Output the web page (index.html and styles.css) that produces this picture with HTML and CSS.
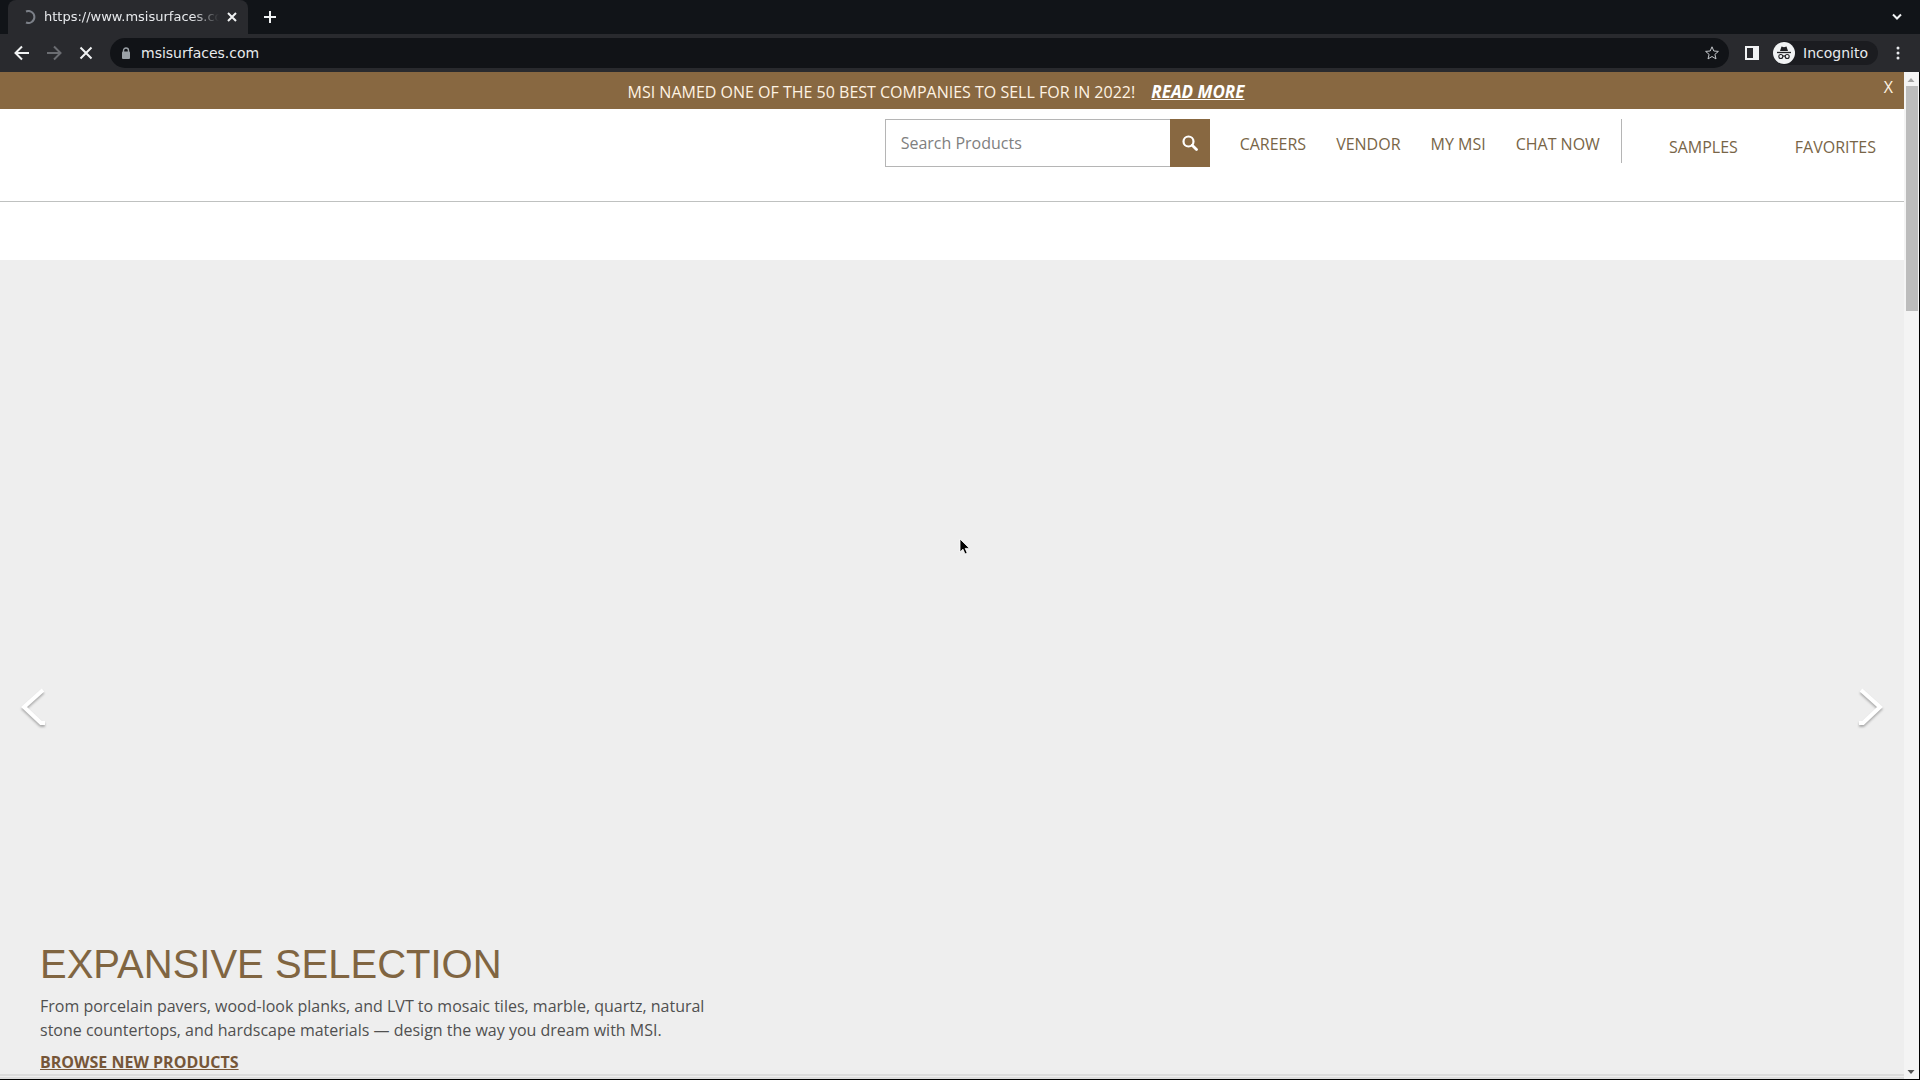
FILE: index.html
```
<!DOCTYPE html>
<html lang="en">
<head>
    <meta charset="UTF-8">
    <meta name="viewport" content="width=device-width, initial-scale=1.0">
    <link rel="stylesheet" href="styles.css">
    <title>MSI Surfaces</title>
</head>
<body>
    <div class="tab-strip">
        <div class="tab">
            <svg class="spinner" width="14" height="14" viewBox="0 0 14 14"><path d="M4 1.500a6 6 0 1 1 0 11"/></svg>
            <span class="tab-title">https://www.msisurfaces.com</span>
            <button class="icon-btn" aria-label="Close tab">
                <svg width="10" height="10" viewBox="0 0 10 10"><path d="M1 1l8 8M9 1l-8 8"/></svg>
            </button>
        </div>
        <button class="icon-btn new-tab" aria-label="New tab">
            <svg width="14" height="14" viewBox="0 0 14 14"><path d="M7 1v12M1 7h12"/></svg>
        </button>
        <button class="icon-btn tab-search" aria-label="Search tabs">
            <svg width="12" height="8" viewBox="0 0 12 8"><path d="M2 1.500l4 4 4-4"/></svg>
        </button>
    </div>

    <div class="toolbar">
        <button class="icon-btn" aria-label="Back">
            <svg width="16" height="16" viewBox="0 0 16 16"><path d="M15 8H2M8 1.500L1.500 8 8 14.500"/></svg>
        </button>
        <button class="icon-btn dim" aria-label="Forward">
            <svg width="16" height="16" viewBox="0 0 16 16"><path d="M1 8h13M8 1.500L14.500 8 8 14.500"/></svg>
        </button>
        <button class="icon-btn" aria-label="Stop loading">
            <svg width="16" height="16" viewBox="0 0 16 16"><path d="M2.500 2.500l11 11M13.500 2.500l-11 11"/></svg>
        </button>
        <div class="address-bar">
            <svg class="lock" width="10" height="13" viewBox="0 0 10 13">
                <path d="M2.500 6V3.500a2.500 2.500 0 0 1 5 0V6" fill="none" stroke="#9aa0a6" stroke-width="1.400"/>
                <rect x="1" y="4.500" width="8" height="7.500" rx="1" fill="#9aa0a6"/>
            </svg>
            <input type="text" class="url" value="msisurfaces.com" aria-label="Address">
            <button class="icon-btn star" aria-label="Bookmark this tab">
                <svg width="16" height="16" viewBox="0 0 16 16"><path d="M8 1.800l1.800 4.200 4.600.4-3.500 3 1.100 4.500L8 11.500l-4 2.400 1.100-4.500-3.500-3 4.600-.4z"/></svg>
            </button>
        </div>
        <button class="icon-btn side-panel" aria-label="Side panel">
            <svg width="14" height="14" viewBox="0 0 14 14"><rect x="1" y="1" width="12" height="12"/><path d="M9 1h4v12H9z" fill="#f1f3f4"/></svg>
        </button>
        <div class="incognito">
            <svg width="22" height="22" viewBox="0 0 22 22">
                <circle cx="11" cy="11" r="11" fill="#f1f3f4"/>
                <path d="M7 9l1.500-4.500 2.500.7 2.500-.7L15 9z" fill="#202124"/>
                <path d="M4 10.500h14" stroke="#202124" stroke-width="1.300"/>
                <g fill="none" stroke="#202124" stroke-width="1.100">
                    <circle cx="7.800" cy="14.500" r="2"/>
                    <circle cx="14.200" cy="14.500" r="2"/>
                    <path d="M9.800 14.200q1.200-.6 2.400 0"/>
                </g>
            </svg>
            <span>Incognito</span>
        </div>
        <button class="icon-btn menu" aria-label="Menu">
            <svg width="4" height="14" viewBox="0 0 4 14"><g fill="#e8eaed" stroke="none"><circle cx="2" cy="2" r="1.500"/><circle cx="2" cy="7" r="1.500"/><circle cx="2" cy="12" r="1.500"/></g></svg>
        </button>
    </div>

    <div class="viewport">
        <div class="page">
            <div class="banner">
                <p>MSI NAMED ONE OF THE 50 BEST COMPANIES TO SELL FOR IN 2022! <a href="#">READ MORE</a></p>
                <button class="banner-close" aria-label="Close banner">X</button>
            </div>

            <header class="header">
                <form class="search">
                    <input type="text" placeholder="Search Products" aria-label="Search Products">
                    <button type="button" aria-label="Search">
                        <svg width="16" height="16" viewBox="0 0 16 16" fill="none" stroke="#fff">
                            <circle cx="6.500" cy="6.500" r="5" stroke-width="2.200"/>
                            <path d="M10.200 10.200l4.300 4.300" stroke-width="2.800" stroke-linecap="round"/>
                        </svg>
                    </button>
                </form>
                <nav class="main-links">
                    <a href="#">CAREERS</a>
                    <a href="#">VENDOR</a>
                    <a href="#">MY MSI</a>
                    <a href="#">CHAT NOW</a>
                </nav>
                <nav class="user-links">
                    <a href="#">SAMPLES</a>
                    <a href="#">FAVORITES</a>
                </nav>
            </header>

            <div class="menu-bar"></div>

            <section class="hero">
                <button class="arrow arrow-prev" aria-label="Previous slide">
                    <svg width="28" height="40" viewBox="0 0 28 40"><path d="M25 3L6 20l17 16h4"/></svg>
                </button>
                <button class="arrow arrow-next" aria-label="Next slide">
                    <svg width="28" height="40" viewBox="0 0 28 40"><path d="M3 3l19 17L5 36H1"/></svg>
                </button>
                <div class="caption">
                    <h1>EXPANSIVE SELECTION</h1>
                    <p>From porcelain pavers, wood-look planks, and LVT to mosaic tiles, marble, quartz, natural stone countertops, and hardscape materials — design the way you dream with MSI.</p>
                    <a href="#">BROWSE NEW PRODUCTS</a>
                </div>
            </section>
        </div>

        <div class="scrollbar">
            <svg width="14" height="14" viewBox="0 0 14 14"><path d="M3.500 10L7 6l3.500 4z" fill="#a3a3a3"/></svg>
            <div class="track"><div class="thumb"></div></div>
            <svg width="14" height="14" viewBox="0 0 14 14"><path d="M3.500 5L7 9l3.500-4z" fill="#505050"/></svg>
        </div>
    </div>

    <svg class="cursor" width="12" height="18" viewBox="0 0 12 18">
        <path d="M1 1v13l3-2.800 2 4.800 2.200-1-2-4.600h4.300z" fill="#000" stroke="#fff" stroke-width=".8"/>
    </svg>
</body>
</html>
```
FILE: styles.css
```
* {
    box-sizing: border-box;
}

body {
    margin: 0;
    height: 100vh;
    display: flex;
    flex-direction: column;
    overflow: hidden;
    background-color: #000;
    font-family: "Open Sans", sans-serif;
    font-size: 16px;
    line-height: 24px;
}

button {
    border: none;
    padding: 0;
    background: none;
    font: inherit;
    cursor: pointer;
}

svg {
    display: block;
    flex: none;
}

/* browser chrome */
.tab-strip {
    display: flex;
    align-items: center;
    height: 34px;
    padding-left: 8px;
    padding-right: 17px;
    background-color: #111418;
    font-family: "DejaVu Sans", sans-serif;
    font-size: 13px;
}

.tab {
    display: flex;
    align-items: center;
    width: 240px;
    height: 34px;
    padding: 0 11px 0 14px;
    border-radius: 8px 8px 0 0;
    background-color: #292a2e;
    color: #e8eaed;
}

.spinner {
    fill: none;
    stroke: #7c8088;
    stroke-width: 2;
}

.tab-title {
    flex: 1;
    margin-left: 8px;
    margin-right: 8px;
    overflow: hidden;
    white-space: nowrap;
    mask-image: linear-gradient(to right, #000 85%, transparent);
}

.icon-btn svg {
    fill: none;
    stroke: #f1f3f4;
    stroke-width: 2;
}

.new-tab {
    margin-left: 15px;
}

.tab-search {
    margin-left: auto;
}

.toolbar {
    display: flex;
    align-items: center;
    height: 38px;
    padding: 0 20px 0 14px;
    background-color: #292a2e;
    color: #e8eaed;
    font-family: "DejaVu Sans", sans-serif;
    font-size: 14px;
}

.toolbar .icon-btn {
    margin-right: 16px;
}

.toolbar .dim svg {
    stroke: #6b6d72;
}

.address-bar {
    flex: 1;
    display: flex;
    align-items: center;
    height: 30px;
    padding: 0 9px 0 11px;
    border-radius: 15px;
    background-color: #111317;
}

.url {
    flex: 1;
    min-width: 0;
    margin-left: 8px;
    border: none;
    background: none;
    color: #e8eaed;
    font-family: "DejaVu Sans", sans-serif;
    font-size: 14px;
}

.toolbar .star {
    margin-right: 0;
}

.star svg {
    stroke: #c4c7cb;
    stroke-width: 1;
}

.toolbar .side-panel {
    margin-left: 16px;
    margin-right: 14px;
}

.incognito {
    display: flex;
    align-items: center;
    gap: 8px;
    height: 24px;
    padding-right: 10px;
    border-radius: 12px;
    background-color: #1b1c20;
}

.toolbar .menu {
    margin-left: 18px;
    margin-right: 0;
}

/* web page */
.viewport {
    flex: 1;
    display: flex;
    min-height: 0;
    margin: 0 1px 1px 0;
    background-color: #f4f4f4;
}

.page {
    flex: 1;
    display: flex;
    flex-direction: column;
    background-color: #fff;
}

.banner {
    position: relative;
    height: 37px;
    padding: 8px 32px 0 0;
    background-color: #886841;
    color: #fff3e3;
    text-align: center;
}

.banner p {
    margin: 0;
}

.banner a {
    margin-left: 12px;
    color: #fff;
    font-size: 17px;
    font-weight: bold;
    font-style: italic;
}

.banner-close {
    position: absolute;
    top: 3px;
    right: 11px;
    color: #fff3e3;
}

.header {
    display: flex;
    justify-content: flex-end;
    align-items: flex-start;
    height: 93px;
    padding: 10px 28px 0 0;
    border-bottom: 1px solid #bfc1c0;
}

.header a {
    color: #786547;
    text-decoration: none;
}

.search {
    display: flex;
}

.search input {
    width: 285px;
    height: 48px;
    padding: 0 15px;
    border: 1px solid #b5b5b5;
    border-right: none;
    font: inherit;
}

.search input::placeholder {
    color: #808080;
}

.search button {
    display: flex;
    align-items: center;
    justify-content: center;
    width: 40px;
    height: 48px;
    background-color: #886841;
}

.main-links {
    display: flex;
    gap: 30px;
    height: 44px;
    padding: 13px 21px 0 30px;
    border-right: 1px solid #b5b5b5;
}

.user-links {
    display: flex;
    gap: 57px;
    padding: 16px 0 0 47px;
}

.menu-bar {
    height: 58px;
}

.hero {
    position: relative;
    flex: 1;
    display: flex;
    align-items: flex-end;
    padding: 0 40px;
    background-color: #eee;
    border-bottom: 5px double #dcdcdc;
}

.arrow {
    position: absolute;
    top: 50%;
    margin-top: 20px;
    filter: drop-shadow(0 2px 1px #aaa);
}

.arrow svg {
    fill: none;
    stroke: #fff;
    stroke-width: 4;
}

.arrow-prev {
    left: 18px;
}

.arrow-next {
    right: 18px;
}

.caption {
    max-width: 680px;
}

.caption h1 {
    margin: 0 0 6px;
    color: #806541;
    font-family: "Liberation Sans", Arial, sans-serif;
    font-size: 40px;
    font-weight: normal;
    line-height: 48px;
}

.caption p {
    margin: 0 0 8px;
    color: #505050;
}

.caption a {
    display: block;
    color: #765638;
    font-weight: bold;
}

.scrollbar {
    display: flex;
    flex-direction: column;
    width: 15px;
}

.track {
    flex: 1;
}

.thumb {
    width: 12px;
    height: 23%;
    margin-left: 2px;
    background-color: #bcbcbc;
}

/* mouse pointer */
.cursor {
    position: absolute;
    left: calc(50% - 1px);
    top: calc(50% - 2px);
}
```
